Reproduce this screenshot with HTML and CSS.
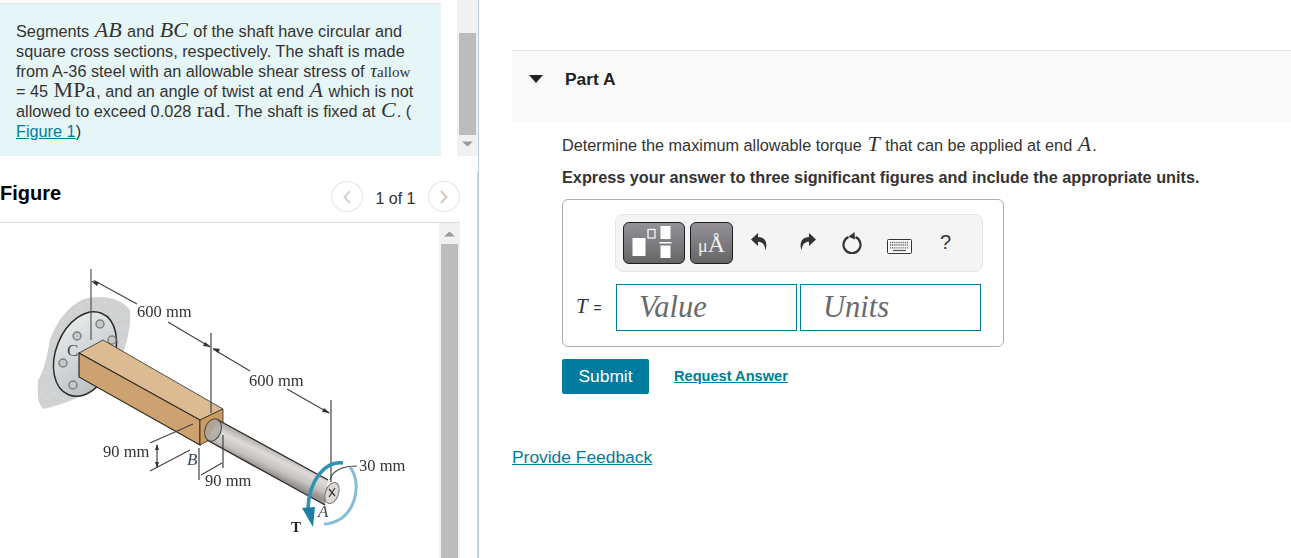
FILE: index.html
```html
<!DOCTYPE html>
<html lang="en">
<head>
<meta charset="utf-8">
<title>Part A</title>
<link rel="stylesheet" href="styles.css">
</head>
<body>
<div class="page">
  <aside class="left">
    <div class="top-row">
      <section class="problem">
        <p>Segments <i class="m">AB</i> and <i class="m">BC</i> of the shaft have circular and square cross sections, respectively. The shaft is made from A-36 steel with an allowable shear stress of <i class="m tau">τ</i><span class="m sub">allow</span> = 45 <span class="m">MPa</span>, and an angle of twist at end <i class="m">A</i> which is not allowed to exceed 0.028 <span class="m">rad</span>. The shaft is fixed at <i class="m">C</i>. (<br><a href="#">Figure 1</a>)</p>
      </section>
      <div class="scroll scroll-top">
        <div class="thumb"></div>
        <svg class="tri" width="11" height="6" viewBox="0 0 11 6"><path d="M0 .5h11L5.500 5.500z" fill="#9a9a9a"/></svg>
      </div>
    </div>
    <div class="fig-head">
      <h2>Figure</h2>
      <div class="pager">
        <span class="circle"><svg width="10" height="14" viewBox="0 0 10 14"><path d="M8 1 2.500 7 8 13" fill="none" stroke="#d2d2d2" stroke-width="2"/></svg></span>
        <span class="count">1 of 1</span>
        <span class="circle"><svg width="10" height="14" viewBox="0 0 10 14"><path d="M2 1 7.500 7 2 13" fill="none" stroke="#d6cbb9" stroke-width="2"/></svg></span>
      </div>
    </div>
    <div class="fig-body">
      <svg class="diagram" width="439" height="335" viewBox="0 223 439 335" xmlns="http://www.w3.org/2000/svg">
        <defs>
          <linearGradient id="shaft" gradientUnits="userSpaceOnUse" x1="270" y1="448" x2="260" y2="469">
            <stop offset="0" stop-color="#b9b3af"/><stop offset=".3" stop-color="#dedad8"/><stop offset=".7" stop-color="#c6c2bf"/><stop offset="1" stop-color="#97938e"/>
          </linearGradient>
          <linearGradient id="plate" x1="0" y1="0" x2="1" y2="1">
            <stop offset="0" stop-color="#eef0f1"/><stop offset="1" stop-color="#b6babd"/>
          </linearGradient>
          <pattern id="speck" width="17" height="13" patternUnits="userSpaceOnUse">
            <rect width="17" height="13" fill="#cfd1d2"/>
            <circle cx="3" cy="3" r=".8" fill="#e9eaea"/><circle cx="12" cy="9" r=".8" fill="#e6e7e7"/><circle cx="9" cy="2" r=".6" fill="#dfe0e0"/><circle cx="5" cy="10" r=".6" fill="#c0c2c3"/>
          </pattern>
          <filter id="soft"><feGaussianBlur stdDeviation=".35"/></filter>
          <filter id="softer"><feGaussianBlur stdDeviation=".2"/></filter>
        </defs>
        <g filter="url(#soft)">
          <path d="M84 299C100 294 122 298 130 310 132 330 124 352 116 372 100 388 74 402 44 409 36 404 38 390 38 380 44 372 47 356 50 340 56 322 68 306 84 299Z" fill="url(#speck)"/>
          <ellipse cx="85" cy="354" rx="29" ry="44" transform="rotate(22 85 354)" fill="url(#plate)" stroke="#2b2b2b" stroke-width="1.500"/>
          <g fill="#c6c9ca" stroke="#808080" stroke-width="1.500">
            <ellipse cx="100" cy="324" rx="4" ry="4"/><ellipse cx="77" cy="336" rx="4" ry="4"/><ellipse cx="112" cy="340" rx="4" ry="4"/><ellipse cx="63" cy="363" rx="4" ry="4"/><ellipse cx="73" cy="385" rx="4" ry="4"/>
          </g>
          <path d="M91 269V340" stroke="#555" stroke-width="1.200"/>
          <path d="M79 353 103 340 223 409 200 420Z" fill="#dcbb92" stroke="#2f2a25" stroke-width=".8"/>
          <path d="M79 353 200 420V445L79 377Z" fill="#cca26f" stroke="#2f2a25" stroke-width="1.200"/>
          <path d="M200 420 223 409V433L200 445Z" fill="#c99c5e" stroke="#2f2a25" stroke-width=".8"/>
          <path d="M218 420 328 480 325 505 207 440Z" fill="url(#shaft)"/>
          <path d="M218 420 328 480M207 440 325 505" stroke="#2d2b29" stroke-width="1.400" fill="none"/>
          <ellipse cx="213" cy="430" rx="8" ry="11.500" transform="rotate(20 213 430)" fill="#a9a5a0" fill-opacity=".75" stroke="#4a4540" stroke-width="1"/>
          <ellipse cx="332" cy="493" rx="6.500" ry="11" transform="rotate(20 332 493)" fill="#dcdad8" stroke="#777" stroke-width="1"/>
          <path d="M329 497 335 488M329 489 335 496" stroke="#333" stroke-width="1.200"/>
          <g stroke="#444" stroke-width="1.200" fill="none">
            <path d="M94 280.500 137 304M168 322 210 347M213 349 250 371M287 389 329 413"/>
            <path d="M211 333V413M331 400V482M199 448V480M223 435V468M201 475 222 463"/>
            <path d="M150 443 193 424M150 471 190 450M157 445V467"/>
            <path d="M357 466C344 466 332 470 330 480"/>
          </g>
          <path d="M91 281 99 282 97 286ZM211 347 203 346 205 342ZM213 348 220 349 218 353ZM330 413 322 412 324 408ZM157 444 155 450H159ZM157 468 155 462H159Z" fill="#333"/>
          <path d="M343 463C326 460 309 480 308 508" fill="none" stroke="#2f93b4" stroke-width="3.500"/>
          <path d="M302 508 315 507 313 527Z" fill="#1f7fa3"/>
          <path d="M350 467C360 480 358 505 342 518 336 522 330 524 324 524" fill="none" stroke="#86bfd5" stroke-width="3"/>
        </g>
        <g class="fig-label" filter="url(#softer)">
          <text x="137" y="317">600 mm</text>
          <text x="249" y="386">600 mm</text>
          <text x="103" y="457">90 mm</text>
          <text x="205" y="486">90 mm</text>
          <text x="359" y="471">30 mm</text>
        </g>
        <g filter="url(#softer)">
          <text class="fig-letter upright" x="67" y="356">C</text>
          <text class="fig-letter" x="187" y="465">B</text>
          <text class="fig-letter" x="318" y="517">A</text>
          <text class="fig-t" x="291" y="532">T</text>
        </g>
      </svg>
      <div class="scroll scroll-fig">
        <svg class="tri" width="11" height="6" viewBox="0 0 11 6"><path d="M0 5.500h11L5.500 .5z" fill="#9a9a9a"/></svg>
        <div class="thumb"></div>
      </div>
    </div>
  </aside>
  <main class="right">
    <header class="part-head">
      <svg class="caret" width="14" height="8" viewBox="0 0 14 8"><path d="M0 0h14L7 8z" fill="#222"/></svg>
      <h3>Part A</h3>
    </header>
    <div class="part-body">
      <p class="q">Determine the maximum allowable torque <i class="m">T</i> that can be applied at end <i class="m">A</i>.</p>
      <p class="q strong">Express your answer to three significant figures and include the appropriate units.</p>
      <div class="answer">
        <div class="toolbar">
          <button class="tool wide" type="button" aria-label="Templates">
            <svg width="51" height="34" viewBox="0 0 51 34"><rect x="3.500" y="12" width="13" height="18" fill="#fff"/><rect x="19" y="3.500" width="7" height="8.500" fill="none" stroke="#fff" stroke-width="1.200"/><rect x="31.500" y="0" width="10" height="13" fill="#fff"/><rect x="30.500" y="16" width="12" height="1.500" fill="#fff"/><rect x="31.500" y="19.500" width="10" height="12.500" fill="#fff"/></svg>
          </button>
          <button class="tool mu" type="button"><span class="mu-a">μ</span><span class="mu-b">Å</span></button>
          <span class="icon i-undo"><svg width="17" height="19" viewBox="0 0 17 19"><path d="M7 1 0 7.500 7 14V9.800C11 9.800 13.500 11.500 14.500 18.500 16.500 12 15.500 5.300 7 5Z" fill="#333"/></svg></span>
          <span class="icon i-redo"><svg width="17" height="19" viewBox="0 0 17 19"><path d="M10 1 17 7.500 10 14V9.800C6 9.800 3.500 11.500 2.500 18.500 .5 12 1.500 5.300 10 5Z" fill="#333"/></svg></span>
          <span class="icon i-reset"><svg width="20" height="22" viewBox="0 0 20 22"><path d="M6.500 5A8.500 8.500 0 1 0 13.500 5" fill="none" stroke="#333" stroke-width="2.200"/><path d="M12.500 0 6.500 4.800 13 7.500Z" fill="#333"/></svg></span>
          <span class="icon i-keys"><svg width="25" height="15" viewBox="0 0 25 15"><rect x=".5" y=".5" width="24" height="14" rx="1" fill="#fff" stroke="#333"/><path d="M3 3.500h19M3 6h19" stroke="#666" stroke-width="1.300" stroke-dasharray="1.300 .8"/><path d="M3 8.800h19" stroke="#666" stroke-width="1.300" stroke-dasharray="1.300 .8"/><path d="M6 11.500h13" stroke="#555" stroke-width="1.300"/></svg></span>
          <span class="help">?</span>
        </div>
        <div class="input-row">
          <label class="var"><i class="m">T</i> =</label>
          <div class="field">Value</div>
          <div class="field units">Units</div>
        </div>
      </div>
      <div class="actions">
        <button class="submit" type="button">Submit</button>
        <a class="request" href="#">Request Answer</a>
      </div>
    </div>
    <a class="feedback" href="#">Provide Feedback</a>
  </main>
</div>
</body>
</html>
```
FILE: styles.css
```css
* { box-sizing: border-box; }
html, body { margin: 0; height: 100%; }
body {
  font-family: "Liberation Sans", Arial, sans-serif;
  color: #333;
  background: #fff;
  overflow: hidden;
}
.page { display: flex; height: 558px; overflow: hidden; }
.left {
  width: 479px;
  flex: none;
  border-right: 1px solid #b9cde0;
  background: linear-gradient(#c3d4e6, #c3d4e6) no-repeat 477px 172px / 1px 100%;
  display: flex;
  flex-direction: column;
}
.top-row { display: flex; height: 156px; flex: none; }
.problem {
  width: 441px;
  margin-top: 3px;
  background: #e6f5f6;
  border-top: 1px solid #dfe3e3;
  padding: 17px 27px 0 16px;
}
.problem p { margin: 0; font-size: 16.250px; line-height: 20px; }
.m { font-family: "Liberation Serif", "DejaVu Serif", serif; font-size: 22px; line-height: 0; padding: 0 1px; }
.tau { font-size: 19px; padding-right: 0; }
.sub { font-size: 15px; padding-left: 0; color: #333; }
a { color: #007c9e; }
.scroll { background: #f1f1f1; display: flex; flex-direction: column; align-items: center; }
.scroll-top { width: 21px; margin-left: 16px; }
.scroll-top .thumb { width: 17px; height: 102px; margin-top: 33px; background: #bcbcbc; }
.scroll-top .tri { margin-top: 6px; }
.fig-head {
  width: 460px;
  height: 67px;
  flex: none;
  border-bottom: 1px solid #dcdcdc;
  display: flex;
  align-items: flex-start;
  justify-content: space-between;
  padding-top: 25px;
}
.fig-head h2 { margin: 0; font-size: 20px; line-height: 24px; font-weight: bold; color: #000; }
.pager { display: flex; align-items: center; }
.circle {
  width: 32px;
  height: 31px;
  border: 1px solid #e4e4e4;
  border-radius: 50%;
  display: flex;
  align-items: center;
  justify-content: center;
}
.count { font-size: 16px; width: 65px; text-align: center; padding-top: 5px; }
.fig-body { display: flex; flex: 1; width: 460px; min-height: 0; }
.diagram { display: block; flex: none; }
.fig-label text { font-family: "Liberation Serif", serif; font-size: 16.500px; fill: #333; }
.fig-letter { font-family: "Liberation Serif", serif; font-style: italic; font-size: 17px; fill: #3a4a5a; }
.upright { font-style: normal; }
.fig-t { font-family: "Liberation Serif", serif; font-weight: bold; font-size: 15px; fill: #222; }
.scroll-fig { width: 21px; }
.scroll-fig .tri { margin-top: 8px; }
.scroll-fig .thumb { width: 17px; flex: 1; margin-top: 7px; background: #bcbcbc; }
.right { flex: 1; min-width: 0; padding: 50px 0 0 33px; }
.part-head {
  height: 72px;
  border-top: 1px solid #e0e0e0;
  background: #f9f9f9;
  display: flex;
  align-items: flex-start;
  padding: 18px 0 0 17px;
}
.caret { margin-top: 6px; flex: none; }
.part-head h3 { margin: 0 0 0 22px; font-size: 17.400px; line-height: 20px; font-weight: bold; color: #222; }
.part-body { padding: 13px 0 0 50px; }
.q { margin: 0; font-size: 16.250px; line-height: 20px; }
.strong { font-weight: bold; margin-top: 12px; }
.answer {
  width: 442px;
  height: 148px;
  margin-top: 12px;
  border: 1px solid #adadad;
  border-radius: 6px;
  padding: 14px 0 0 52px;
}
.toolbar {
  width: 368px;
  height: 58px;
  background: #f4f4f4;
  border: 1px solid #e6e6e6;
  border-radius: 8px;
  display: flex;
  align-items: flex-start;
  padding: 7px 0 0 7px;
}
.tool {
  height: 42px;
  padding: 0;
  border: 1px solid #1d1d1d;
  border-radius: 6px;
  background: linear-gradient(#959298, #656567);
  display: flex;
  align-items: center;
  justify-content: center;
  color: #f2f2f2;
}
.wide { width: 62px; }
.mu { width: 43px; margin-left: 5px; font-family: "Liberation Serif", serif; align-items: baseline; padding-top: 9px; }
.mu-a { font-size: 18px; }
.mu-b { font-size: 24px; line-height: 24px; }
.icon { display: flex; margin-top: 10px; }
.i-undo { margin-left: 18px; }
.i-redo { margin-left: 31px; }
.i-reset { margin-left: 26px; margin-top: 10px; }
.i-keys { margin-left: 25px; margin-top: 17px; }
.help { margin-left: 28px; margin-top: 9px; font-size: 20px; line-height: 22px; }
.input-row { display: flex; align-items: center; margin: 12px 0 0 -39px; }
.var { width: 40px; font-size: 14px; white-space: nowrap; word-spacing: 2px; }
.var .m { font-size: 21px; padding: 0; }
.field {
  width: 181px;
  height: 47px;
  border: 1px solid #007c9e;
  font-family: "Liberation Serif", serif;
  font-style: italic;
  font-size: 30.500px;
  line-height: 45px;
  padding-left: 22px;
  color: #6a6a6a;
}
.units { margin-left: 3px; }
.actions { display: flex; align-items: center; margin-top: 12px; }
.submit {
  width: 87px;
  height: 35px;
  border: 0;
  border-radius: 2px;
  padding: 0;
  background: #007c9e;
  color: #fff;
  font: 17.400px "Liberation Sans", Arial, sans-serif;
}
.request { margin: -2px 0 0 25px; font-size: 14.600px; font-weight: bold; color: #007c9e; }
.feedback { display: block; margin-top: 53px; font-size: 17.400px; line-height: 20px; width: max-content; color: #007c9e; }
```
